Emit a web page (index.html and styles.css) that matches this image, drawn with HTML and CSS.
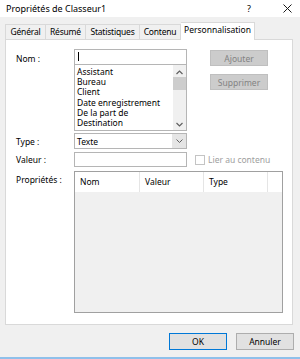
FILE: index.html
```html
<!DOCTYPE html>
<html lang="fr">
<head>
    <meta charset="UTF-8">
    <meta name="viewport" content="width=device-width, initial-scale=1.0">
    <title>Propriétés de Classeur1</title>
    <link rel="stylesheet" href="styles.css">
</head>
<body>
    <div class="window">
        <div class="titlebar">
            <span class="title">Propriétés de Classeur1</span>
            <span class="help">?</span>
            <span class="close">
                <svg width="9" height="9" viewBox="0 0 9 9"><path d="M0.5 0.5 L8.5 8.5 M8.5 0.5 L0.5 8.5" stroke="#1a1a1a" stroke-width="1"/></svg>
            </span>
        </div>

        <div class="tabs">
            <div class="tab tab-general">Général</div>
            <div class="tab tab-resume">Résumé</div>
            <div class="tab tab-stats">Statistiques</div>
            <div class="tab tab-contenu">Contenu</div>
            <div class="tab tab-perso active">Personnalisation</div>
        </div>

        <div class="panel">
            <div class="row-top">
                <label class="lbl lbl-nom">Nom :</label>
                <div class="field">
                    <div class="input"><span class="caret"></span></div>
                    <div class="listbox">
                        <ul class="items">
                            <li>Assistant</li>
                            <li>Bureau</li>
                            <li>Client</li>
                            <li>Date enregistrement</li>
                            <li>De la part de</li>
                            <li>Destination</li>
                        </ul>
                        <div class="scrollbar">
                            <svg class="arrow" width="7" height="5" viewBox="0 0 7 5"><path d="M0.5 4 L3.5 1 L6.5 4" fill="none" stroke="#606060" stroke-width="1.2"/></svg>
                            <div class="track"><div class="thumb"></div></div>
                            <svg class="arrow" width="7" height="5" viewBox="0 0 7 5"><path d="M0.5 1 L3.5 4 L6.5 1" fill="none" stroke="#606060" stroke-width="1.2"/></svg>
                        </div>
                    </div>
                </div>
                <div class="actions">
                    <button class="btn-disabled">Ajouter</button>
                    <button class="btn-disabled">Supprimer</button>
                </div>
            </div>

            <div class="row row-type">
                <label class="lbl">Type :</label>
                <div class="combo">
                    <span class="combo-text">Texte</span>
                    <span class="combo-btn">
                        <svg width="7" height="4" viewBox="0 0 7 4"><path d="M0.5 0.5 L3.5 3.5 L6.5 0.5" fill="none" stroke="#606060" stroke-width="1"/></svg>
                    </span>
                </div>
            </div>

            <div class="row row-valeur">
                <label class="lbl">Valeur :</label>
                <div class="input input-valeur"></div>
                <span class="checkbox"></span>
                <span class="check-label">Lier au contenu</span>
            </div>

            <div class="row row-props">
                <label class="lbl">Propriétés :</label>
                <div class="table">
                    <div class="thead">
                        <div class="th th-nom">Nom</div>
                        <div class="th th-valeur">Valeur</div>
                        <div class="th th-type">Type</div>
                        <div class="th th-last"></div>
                    </div>
                </div>
            </div>
        </div>

        <div class="footer">
            <button class="btn btn-ok">OK</button>
            <button class="btn">Annuler</button>
        </div>
    </div>
</body>
</html>
```

FILE: styles.css
```css
* {
    box-sizing: border-box;
}
body {
    margin: 0;
    font-family: "Noto Sans", "Open Sans", sans-serif;
    font-size: 8.5px;
    color: #000;
    background: #f0f0f0;
}
.window {
    width: 300px;
    height: 359px;
    background: #f0f0f0;
    border-bottom: 2px solid #8fc0ea;
}
.titlebar {
    height: 17px;
    background: #fff;
    display: flex;
    align-items: center;
    padding-left: 6px;
    font-size: 9px;
}
.title {
    flex: 1;
}
.help {
    width: 36px;
    font-size: 9px;
}
.close {
    width: 17px;
    display: flex;
    align-items: center;
}
.tabs {
    display: flex;
    align-items: flex-end;
    margin: 5px 0 0 5px;
    height: 17px;
}
.tab {
    height: 15px;
    line-height: 13px;
    text-align: center;
    white-space: nowrap;
    letter-spacing: -0.2px;
    border: 1px solid #d9d9d9;
    border-bottom: none;
    border-right: none;
    background: #f0f0f0;
}
.tab-general { width: 40px; }
.tab-resume { width: 40px; }
.tab-stats { width: 54px; }
.tab-contenu {
    width: 42px;
    border-right: 1px solid #d9d9d9;
}
.tab.active {
    width: 74px;
    height: 18px;
    margin-bottom: -1px;
    background: #fff;
    border-right: 1px solid #d9d9d9;
    border-left: none;
    letter-spacing: 0;
    line-height: 14px;
    position: relative;
    z-index: 1;
}
.panel {
    margin-left: 5px;
    width: 288px;
    height: 286px;
    background: #fff;
    border: 1px solid #d9d9d9;
    padding: 9px 0 0 10px;
}
.lbl {
    display: block;
    width: 58px;
    flex-shrink: 0;
}
.row-top {
    display: flex;
    height: 81px;
}
.lbl-nom {
    padding-top: 4px;
}
.field {
    width: 113px;
}
.input {
    height: 16px;
    border: 1px solid #b5b5b5;
    background: #fff;
    padding: 2px 3px;
}
.caret {
    display: block;
    width: 1px;
    height: 9px;
    background: #000;
}
.listbox {
    height: 66px;
    border: 1px solid #b5b5b5;
    border-top: none;
    display: flex;
}
.items {
    list-style: none;
    margin: 0;
    padding: 2px 0 0 2px;
    flex: 1;
    line-height: 10.2px;
    overflow: hidden;
    white-space: nowrap;
}
.scrollbar {
    width: 13px;
    background: #f0f0f0;
    display: flex;
    flex-direction: column;
    align-items: center;
    padding: 5px 0 3px;
}
.arrow {
    display: block;
}
.track {
    flex: 1;
    width: 100%;
    padding-top: 2px;
}
.thumb {
    height: 13px;
    background: #cdcdcd;
}
.actions {
    margin-left: 23px;
    padding-top: 1px;
    display: flex;
    flex-direction: column;
    gap: 8px;
}
.btn-disabled {
    width: 58px;
    height: 16px;
    padding: 0;
    font: inherit;
    color: #838383;
    background: #cccccc;
    border: 1px solid #bfbfbf;
}
.row {
    display: flex;
    align-items: center;
}
.row-type {
    margin-top: 3px;
    height: 16px;
}
.combo {
    width: 113px;
    height: 16px;
    border: 1px solid #b5b5b5;
    display: flex;
    align-items: center;
}
.combo-text {
    flex: 1;
    padding-left: 2px;
}
.combo-btn {
    width: 14px;
    height: 14px;
    background: #e5e5e5;
    display: flex;
    align-items: center;
    justify-content: center;
}
.row-valeur {
    margin-top: 3px;
    height: 15px;
}
.input-valeur {
    width: 113px;
    height: 15px;
}
.checkbox {
    width: 10px;
    height: 10px;
    border: 1px solid #c4c4c4;
    margin-left: 8px;
}
.check-label {
    margin-left: 3px;
    color: #9e9e9e;
}
.row-props {
    margin-top: 4px;
    align-items: flex-start;
}
.row-props .lbl {
    padding-top: 3px;
}
.table {
    width: 209px;
    height: 142px;
    border: 1px solid #a0a0a0;
    background: #f0f0f0;
}
.thead {
    display: flex;
    height: 20px;
    background: #fff;
}
.th {
    width: 64px;
    padding-left: 5px;
    line-height: 20px;
    border-right: 1px solid #e5e5e5;
}
.th-nom {
    width: 65px;
}
.th-last {
    flex: 1;
    border-right: none;
}
.footer {
    display: flex;
    justify-content: flex-end;
    gap: 9px;
    padding: 8px 6px 0 0;
}
.btn {
    width: 58px;
    height: 17px;
    padding: 0;
    font: inherit;
    background: #e1e1e1;
    border: 1px solid #adadad;
}
.btn-ok {
    border: 1px solid #0078d7;
}
```
